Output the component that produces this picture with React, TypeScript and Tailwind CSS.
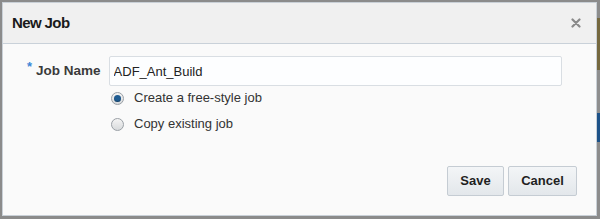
import React from "react";

function CloseIcon() {
  return (
    <svg width="10" height="10" viewBox="0 0 10 10" className="block">
      <path d="M1.5 1.5 L8.5 8.5 M8.5 1.5 L1.5 8.5" stroke="#8a8a8a" strokeWidth="2.2" strokeLinecap="round" />
    </svg>
  );
}

function Radio({ checked, label }: { checked: boolean; label: string }) {
  return (
    <label className="flex h-[20px] items-center">
      <span className="flex h-[13px] w-[13px] items-center justify-center rounded-full border border-[#9aa0a6] bg-gradient-to-b from-[#f4f4f4] to-[#d8dadc]">
        {checked ? <span className="h-[7px] w-[7px] rounded-full bg-[#1f5c92] shadow-[inset_0_-1px_1px_rgba(0,0,0,0.3)]" /> : null}
      </span>
      <span className="ml-[10px] text-[13px] text-[#333]">{label}</span>
    </label>
  );
}

export default function App() {
  return (
    <div
      className="flex h-[219px] w-[600px] bg-[#8b8b8b] pl-[2px] pt-[2px] pb-[3px]"
      style={{ fontFamily: '"Liberation Sans", Arial, sans-serif' }}
    >
      <div className="flex flex-1 flex-col border border-[#c9d0d7] bg-[#fafafa]">
        <div className="flex h-[41px] items-center justify-between border-b border-[#c9d1d9] bg-[#f0f0f0] pl-[9px] pr-[15px]">
          <h1 className="text-[15px] font-bold tracking-[-0.6px] text-[#1a1a1a]">New Job</h1>
          <CloseIcon />
        </div>

        <div className="flex flex-1 flex-col pt-[12px]">
          <div className="flex items-center pl-[24px]">
            <span className="mb-[10px] mr-[4px] text-[13px] font-bold leading-none text-[#3d86d6]">*</span>
            <span className="text-[13.5px] font-bold text-[#3a3a3a]">Job Name</span>
            <input
              readOnly
              value="ADF_Ant_Build"
              className="ml-[8px] h-[30px] w-[453px] rounded-[2px] border border-[#d9dee3] bg-[#fdfeff] px-[4px] text-[13px] text-[#222] outline-none"
            />
          </div>

          <div className="ml-[108px] mt-[2px] flex flex-col gap-[6px]">
            <Radio checked label="Create a free-style job" />
            <Radio checked={false} label="Copy existing job" />
          </div>

          <div className="mt-[32px] flex justify-end gap-[4px] pr-[19px]">
            <button className="h-[30px] w-[57px] rounded-[2px] border border-[#c5ccd3] bg-gradient-to-b from-[#f3f5f7] to-[#e3e7eb] text-[13px] font-bold text-[#1f1f1f]">
              Save
            </button>
            <button className="h-[30px] w-[69px] rounded-[2px] border border-[#c5ccd3] bg-gradient-to-b from-[#f3f5f7] to-[#e3e7eb] text-[13px] font-bold text-[#1f1f1f]">
              Cancel
            </button>
          </div>
        </div>
      </div>

      <div className="-mt-[2px] -mb-[3px] flex w-[3px] flex-col">
        <div className="h-[18px] bg-[#8c8c8c]" />
        <div className="h-[52px] bg-[#75683f]" />
        <div className="h-[43px] bg-[#8e8e8e]" />
        <div className="h-[29px] bg-[#1d5288]" />
        <div className="flex-1 bg-[#8c8c8c]" />
      </div>
    </div>
  );
}
